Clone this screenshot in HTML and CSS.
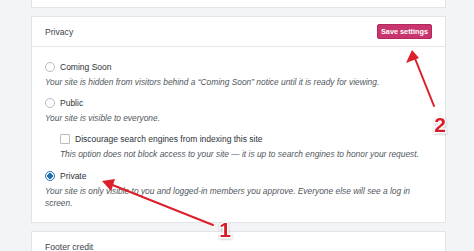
FILE: index.html
```html
<!DOCTYPE html>
<html>
<head>
<meta charset="utf-8">
<link rel="stylesheet" href="styles.css">
</head>
<body>
<div class="page">
  <div class="card card-top"></div>
  <div class="card">
    <div class="card-head">
      <span class="card-title">Privacy</span>
      <button class="btn-save">Save settings</button>
    </div>
    <div class="card-body">
      <div class="opt">
        <label class="row"><span class="radio"></span>Coming Soon</label>
        <p class="desc">Your site is hidden from visitors behind a “Coming Soon” notice until it is ready for viewing.</p>
      </div>
      <div class="opt">
        <label class="row"><span class="radio"></span>Public</label>
        <p class="desc">Your site is visible to everyone.</p>
        <div class="sub">
          <label class="row"><span class="check"></span>Discourage search engines from indexing this site</label>
          <p class="desc">This option does not block access to your site — it is up to search engines to honor your request.</p>
        </div>
      </div>
      <div class="opt opt-private">
        <label class="row"><span class="radio on"></span>Private</label>
        <p class="desc wrap">Your site is only visible to you and logged-in members you approve. Everyone else will see a log in screen.</p>
      </div>
    </div>
  </div>
  <div class="card card-footer">
    <div class="card-head"><span class="card-title">Footer credit</span></div>
  </div>
</div>
<svg class="overlay" width="474" height="251" viewBox="0 0 474 251">
  <defs>
    <filter id="sh" x="-50%" y="-50%" width="200%" height="200%">
      <feDropShadow dx="0" dy="0.6" stdDeviation="0.8" flood-color="#000" flood-opacity="0.35"/>
    </filter>
  </defs>
  <g class="arrow">
    <line x1="434" y1="106" x2="414" y2="56"/>
    <polygon points="412,50 406,63 419,58"/>
    <line x1="213" y1="225" x2="110" y2="184"/>
    <polygon points="102,181 111,191 115,179"/>
  </g>
  <text class="num" x="440" y="132" filter="url(#sh)">2</text>
  <text class="num" x="225" y="237" filter="url(#sh)">1</text>
</svg>
</body>
</html>
```
FILE: styles.css
```css
html, body {
  margin: 0;
  padding: 0;
}
body {
  width: 474px;
  height: 251px;
  overflow: hidden;
  background: #f3f4f5;
  font-family: "Liberation Sans", Arial, sans-serif;
  color: #2c3338;
  position: relative;
}
.page {
  margin-left: 31px;
  width: 415px;
  display: flex;
  flex-direction: column;
  gap: 8px;
}
.card {
  background: #fff;
  border: 1px solid #e2e4e7;
}
.card-top {
  height: 8px;
  border-top: none;
  margin-top: -1px;
}
.card-head {
  height: 29px;
  display: flex;
  align-items: center;
  justify-content: space-between;
  padding: 0 13px 0 13px;
  border-bottom: 1px solid #e6e7e9;
}
.card-title {
  font-size: 8.6px;
  color: #3c434a;
}
.card-footer .card-head {
  border-bottom: none;
  align-items: flex-start;
  padding-top: 10px;
  box-sizing: border-box;
}
.btn-save {
  font-family: inherit;
  font-size: 7.3px;
  font-weight: bold;
  color: #fff;
  background: #c9356e;
  border: 1px solid #b02a5c;
  border-radius: 2px;
  height: 15px;
  width: 55px;
  padding: 0;
  margin-right: 0;
}
.card-body {
  padding: 14px 13px 13px 13px;
}
.opt + .opt {
  margin-top: 9px;
}
.opt-private {
  margin-top: 10px !important;
}
.row {
  display: flex;
  align-items: center;
  height: 12px;
  font-size: 8.5px;
  color: #2c3338;
}
.radio {
  width: 8px;
  height: 8px;
  border: 1px solid #b8bcc0;
  border-radius: 50%;
  margin-right: 5px;
  box-sizing: content-box;
  flex: none;
}
.radio.on {
  border: 1px solid #2271b1;
  background: radial-gradient(circle, #2271b1 0 2.6px, #fff 3px);
}
.check {
  width: 8px;
  height: 8px;
  border: 1px solid #b8bcc0;
  border-radius: 1px;
  margin-right: 5px;
  flex: none;
}
.desc {
  margin: 3px 0 0 0;
  font-size: 8.4px;
  line-height: 12px;
  font-style: italic;
  color: #50575e;
  white-space: nowrap;
}
.desc.wrap {
  white-space: normal;
  width: 378px;
}
.sub {
  margin-top: 9px;
  margin-left: 15px;
}
.overlay {
  position: absolute;
  left: 0;
  top: 0;
  pointer-events: none;
}
.arrow line {
  stroke: #dd1f2a;
  stroke-width: 2;
  stroke-linecap: round;
}
.arrow polygon {
  fill: #dd1f2a;
}
.num {
  font-family: "Liberation Sans", Arial, sans-serif;
  font-weight: bold;
  font-size: 21px;
  fill: #d71f2b;
  stroke: #fff;
  stroke-width: 2.5px;
  paint-order: stroke;
  text-anchor: middle;
}
```
